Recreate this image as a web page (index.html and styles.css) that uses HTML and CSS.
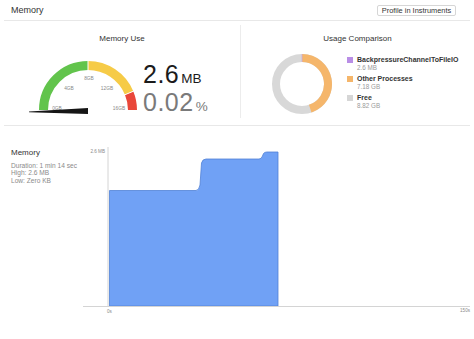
FILE: index.html
```html
<!DOCTYPE html>
<html>
<head>
<meta charset="utf-8">
<link rel="stylesheet" href="styles.css">
</head>
<body>
<div class="header">
  <div class="header-title">Memory</div>
  <div class="btn">Profile in Instruments</div>
</div>
<div class="top">
  <div class="panel left">
    <div class="panel-title">Memory Use</div>
    <div class="row gauge-row">
      <svg class="gauge" width="112" height="62" viewBox="0 0 112 62">
        <path d="M15.5,54 A44.5,44.5 0 0 1 60,9.5" fill="none" stroke="#62c44c" stroke-width="9"/>
        <path d="M60,9.5 A44.5,44.5 0 0 1 101.11,36.97" fill="none" stroke="#f6cb47" stroke-width="9"/>
        <path d="M101.11,36.97 A44.5,44.5 0 0 1 104.5,54" fill="none" stroke="#e9473a" stroke-width="9"/>
        <line x1="60" y1="3" x2="60" y2="16" stroke="#fff" stroke-width="1"/>
        <line x1="95.1" y1="39.5" x2="108.1" y2="34.1" stroke="#fff" stroke-width="1"/>
        <g class="glabel">
          <text x="61" y="23.8" text-anchor="middle">8GB</text>
          <text x="41" y="33.8" text-anchor="middle">4GB</text>
          <text x="79" y="33.8" text-anchor="middle">12GB</text>
          <text x="29" y="53.8" text-anchor="middle">0GB</text>
          <text x="91" y="53.8" text-anchor="middle">16GB</text>
        </g>
        <polygon points="1,55.5 60,52 60,58 1,56.3" fill="#151515"/>
      </svg>
      <div class="numbers">
        <div class="big">2.6<span class="unit">MB</span></div>
        <div class="big gray">0.02<span class="unit">%</span></div>
      </div>
    </div>
  </div>
  <div class="panel right">
    <div class="panel-title">Usage Comparison</div>
    <div class="row donut-row">
      <svg class="donut" width="62" height="62" viewBox="0 0 62 62">
        <circle cx="31" cy="31" r="26" fill="none" stroke="#d8d8d8" stroke-width="8"/>
        <path d="M31,5 A26,26 0 0 1 39.21,55.67" fill="none" stroke="#f5b66b" stroke-width="8"/>
        <line x1="31" y1="1" x2="31" y2="9" stroke="#c8a6e8" stroke-width="0.7"/>
      </svg>
      <div class="legend">
        <div class="item">
          <div class="label"><span class="sw purple"></span>BackpressureChannelToFileIO</div>
          <div class="value">2.6 MB</div>
        </div>
        <div class="item">
          <div class="label"><span class="sw orange"></span>Other Processes</div>
          <div class="value">7.18 GB</div>
        </div>
        <div class="item">
          <div class="label"><span class="sw grey"></span>Free</div>
          <div class="value">8.82 GB</div>
        </div>
      </div>
    </div>
  </div>
</div>
<div class="bottom">
  <div class="info">
    <div class="info-title">Memory</div>
    <div class="info-lines">
      <div>Duration: 1 min 14 sec</div>
      <div>High: 2.6 MB</div>
      <div>Low: Zero KB</div>
    </div>
  </div>
  <svg class="chart" width="391" height="172" viewBox="0 0 391 172">
    <line x1="25" y1="2" x2="25" y2="161.5" stroke="#d4d4d4" stroke-width="1"/>
    <path d="M26.5,161 L26.5,45.5 L113,45.5 Q116,45.5 117,40 L118.5,18 Q119.5,14 123,14 L176,14 Q178.5,14 179.5,11 L180.5,8.5 Q181.5,7 184,7 L195,7 L195,161 Z" fill="#70a1f5" stroke="#5282d6" stroke-width="0.8"/>
    <line x1="0" y1="161.5" x2="387" y2="161.5" stroke="#d4d4d4" stroke-width="1"/>
    <text class="axis" x="22" y="7.8" text-anchor="end">2.6 MB</text>
    <text class="axis" x="24" y="167.8">0s</text>
    <text class="axis" x="387" y="166.8" text-anchor="end">150s</text>
  </svg>
</div>
</body>
</html>
```

FILE: styles.css
```css
html, body {
  margin: 0;
  padding: 0;
  background: #ffffff;
}
body {
  font-family: "Liberation Sans", Arial, sans-serif;
  color: #333;
  width: 474px;
  height: 339px;
  overflow: hidden;
}
.header {
  height: 20px;
  margin: 0 4px;
  padding: 0 14px 0 7px;
  border-bottom: 1px solid #e8e8e8;
  display: flex;
  align-items: center;
  justify-content: space-between;
}
.header-title {
  font-size: 9px;
  color: #333;
}
.btn {
  width: 79px;
  height: 11px;
  box-sizing: border-box;
  border: 1px solid #d6d6d6;
  border-radius: 2px;
  font-size: 7.4px;
  line-height: 9px;
  text-align: center;
  color: #333;
  background: #fff;
}
.top {
  display: grid;
  grid-template-columns: 236px 1fr;
  padding: 4px 0 7px;
  margin: 0 4px;
  border-bottom: 1px solid #e8e8e8;
}
.panel {
  height: 93px;
  display: flex;
  flex-direction: column;
}
.panel.left {
  margin-left: -4px;
}
.panel.left .panel-title {
  padding-left: 4px;
}
.panel.right {
  border-left: 1px solid #ececec;
  margin-right: -4px;
}
.panel-title {
  margin-top: 9px;
  font-size: 8px;
  line-height: 10px;
  text-align: center;
  color: #333;
}
.row {
  display: flex;
  align-items: flex-start;
}
.gauge-row {
  margin-top: 12px;
  padding-left: 28px;
}
.gauge {
  display: block;
  overflow: visible;
}
.glabel text {
  font-size: 4.8px;
  fill: #888;
  font-family: "Liberation Sans", Arial, sans-serif;
}
.numbers {
  margin-left: 3px;
  margin-top: 4px;
}
.big {
  font-size: 25px;
  line-height: 28px;
  color: #1b1b1b;
  letter-spacing: 0.5px;
}
.big.gray {
  color: #7a7a7a;
}
.unit {
  font-size: 13.5px;
  line-height: 1;
  margin-left: 2px;
  letter-spacing: 0;
}
.donut-row {
  margin-top: 9px;
  padding-left: 30px;
}
.donut {
  display: block;
}
.legend {
  margin-left: 14px;
  margin-top: 3px;
}
.item {
  margin-bottom: 3px;
}
.label {
  font-size: 7px;
  line-height: 8px;
  font-weight: bold;
  color: #333;
  display: flex;
  align-items: center;
  white-space: nowrap;
}
.sw {
  width: 6px;
  height: 6px;
  margin-right: 4px;
  flex: none;
  display: inline-block;
}
.sw.purple { background: #b98ee6; }
.sw.orange { background: #f5b66b; }
.sw.grey { background: #d6d6d6; }
.value {
  font-size: 6.3px;
  line-height: 8px;
  color: #9a9a9a;
  padding-left: 10px;
}
.bottom {
  display: flex;
  align-items: flex-start;
}
.info {
  width: 83px;
  box-sizing: border-box;
  padding: 22px 0 0 11px;
}
.info-title {
  font-size: 8px;
  line-height: 10px;
  color: #333;
}
.info-lines {
  margin-top: 4px;
  font-size: 6.6px;
  line-height: 7.3px;
  color: #8a8a8a;
  white-space: nowrap;
}
.chart {
  display: block;
  margin-top: 19px;
}
.axis {
  font-size: 4.6px;
  fill: #8a8a8a;
  font-family: "Liberation Sans", Arial, sans-serif;
}
```
